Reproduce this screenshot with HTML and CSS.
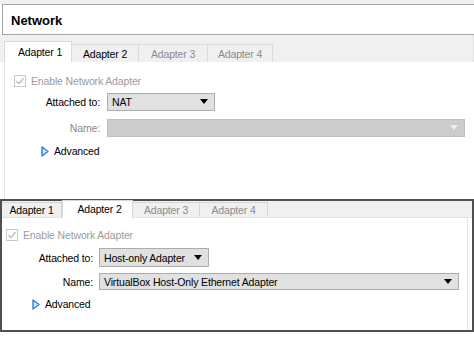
FILE: index.html
```html
<!DOCTYPE html>
<html>
<head>
<meta charset="utf-8">
<link rel="stylesheet" href="styles.css">
</head>
<body>
<div class="page">
  <div class="topstrip"></div>
  <div class="header">Network</div>
  <div class="tabbar">
    <div class="tab sel t1">Adapter 1</div>
    <div class="tab t2">Adapter 2</div>
    <div class="tab dis t3">Adapter 3</div>
    <div class="tab dis t4">Adapter 4</div>
  </div>
  <div class="pane">
    <div class="check">
      <svg width="12" height="12" viewBox="0 0 12 12"><rect x="0.5" y="0.5" width="11" height="11" fill="#fff" stroke="#c8c8c8"/><path d="M2.5 6.2 L5 8.6 L9.6 3.2" fill="none" stroke="#b4b4b4" stroke-width="1.2"/></svg>
      <span class="dim">Enable Network Adapter</span>
    </div>
    <div class="form">
      <div class="lbl">Attached to:</div>
      <div class="sel nat">NAT<svg class="arr" width="8" height="5" viewBox="0 0 8 5"><path d="M0 0 H8 L4 5 Z" fill="#000"/></svg></div>
      <div class="lbl dim2">Name:</div>
      <div class="sel off wide"><svg class="arr" width="8" height="5" viewBox="0 0 8 5"><path d="M0 0 H8 L4 5 Z" fill="#eeeeee"/></svg></div>
    </div>
    <div class="adv">
      <svg width="8" height="11" viewBox="0 0 8 11"><path d="M1 1 L7 5.5 L1 10 Z" fill="#d3e8fb" stroke="#2b84d8" stroke-width="1.4" stroke-linejoin="round"/></svg>
      <span>Advanced</span>
    </div>
  </div>

  <div class="overlay">
    <div class="tabbar2">
      <div class="tab2 u1">Adapter 1</div>
      <div class="tab2 sel u2">Adapter 2</div>
      <div class="tab2 dis u3">Adapter 3</div>
      <div class="tab2 dis u4">Adapter 4</div>
    </div>
    <div class="pane2">
      <div class="check c2">
        <svg width="12" height="12" viewBox="0 0 12 12"><rect x="0.5" y="0.5" width="11" height="11" fill="#fff" stroke="#c8c8c8"/><path d="M2.5 6.2 L5 8.6 L9.6 3.2" fill="none" stroke="#b4b4b4" stroke-width="1.2"/></svg>
        <span class="dim">Enable Network Adapter</span>
      </div>
      <div class="form2">
        <div class="lbl">Attached to:</div>
        <div class="sel host">Host-only Adapter<svg class="arr" width="8" height="5" viewBox="0 0 8 5"><path d="M0 0 H8 L4 5 Z" fill="#000"/></svg></div>
        <div class="lbl">Name:</div>
        <div class="sel wide2">VirtualBox Host-Only Ethernet Adapter<svg class="arr" width="8" height="5" viewBox="0 0 8 5"><path d="M0 0 H8 L4 5 Z" fill="#000"/></svg></div>
      </div>
      <div class="adv adv2">
        <svg width="8" height="11" viewBox="0 0 8 11"><path d="M1 1 L7 5.5 L1 10 Z" fill="#d3e8fb" stroke="#2b84d8" stroke-width="1.4" stroke-linejoin="round"/></svg>
        <span>Advanced</span>
      </div>
    </div>
  </div>
</div>
</body>
</html>
```

FILE: styles.css
```css
* { box-sizing: border-box; }
html, body { margin: 0; padding: 0; }
body {
  width: 474px;
  height: 344px;
  overflow: hidden;
  background: #fff;
  font-family: "Liberation Sans", Arial, sans-serif;
  font-size: 10.5px;
  letter-spacing: -0.15px;
  color: #000;
}
.page {
  position: relative;
  width: 474px;
  height: 344px;
}
.topstrip {
  height: 4px;
  background: #f0f0f0;
}
.header {
  height: 31px;
  margin-left: 2px;
  border-top: 1px solid #a3a3a3;
  border-bottom: 1px solid #a3a3a3;
  border-left: 1px solid #a3a3a3;
  background: #fff;
  font-weight: bold;
  font-size: 13px;
  letter-spacing: 0;
  display: flex;
  align-items: center;
  padding-left: 8px;
  padding-top: 1px;
}
.tabbar {
  height: 27px;
  background: #f0f0f0;
  display: flex;
  align-items: flex-end;
  padding-left: 4px;
  border-right: 1px solid #e2e2e2;
}
.tab {
  height: 18px;
  border: 1px solid #dadada;
  border-bottom: none;
  border-left: none;
  background: #f0f0f0;
  display: flex;
  align-items: center;
  justify-content: center;
  padding-top: 1px;
}
.tab.sel {
  height: 21px;
  background: #fff;
  border: 1px solid #dadada;
  border-bottom: none;
  padding-top: 0;
}
.t1 { width: 68px; }
.t2 { width: 67px; }
.t3 { width: 69px; }
.t4 { width: 65px; }
.dis { color: #8c8c8c; }
.pane {
  height: 258px;
  margin-left: 4px;
  border-left: 1px solid #e6e6e6;
  background: #fff;
  padding-top: 12px;
}
.check {
  display: flex;
  align-items: center;
  gap: 5px;
  height: 13px;
  padding-left: 9px;
}
.check svg { flex: none; }
.dim { color: #9c9c9c; }
.dim2 { color: #8a8a8a; }
.form {
  display: grid;
  grid-template-columns: 102px 358px;
  grid-template-rows: 18px 18px;
  row-gap: 8px;
  margin-top: 6px;
  align-items: center;
}
.lbl {
  text-align: right;
  padding-right: 7px;
}
.sel {
  position: relative;
  height: 100%;
  display: flex;
  align-items: center;
  padding-left: 4px;
  background: #e1e1e1;
  border: 1px solid #adadad;
}
.sel .arr {
  position: absolute;
  right: 6px;
  top: 50%;
  margin-top: -3px;
}
.nat { width: 108px; }
.off {
  background: #cccccc;
  border-color: #bfbfbf;
}
.wide { width: 358px; }
.adv {
  display: flex;
  align-items: center;
  gap: 5px;
  height: 12px;
  margin-top: 8px;
  padding-left: 36px;
}
.adv svg { flex: none; }

.overlay {
  position: absolute;
  left: 0;
  top: 199px;
  width: 474px;
  height: 133px;
  border: 2px solid #505050;
  background: #fff;
}
.tabbar2 {
  height: 17px;
  background: #f0f0f0;
  display: flex;
  align-items: flex-end;
  border-bottom: 1px solid #e4e4e4;
}
.tab2 {
  height: 15px;
  border: 1px solid #d6d6d6;
  border-bottom: none;
  border-left: none;
  background: #f0f0f0;
  display: flex;
  align-items: center;
  justify-content: center;
}
.tab2.sel {
  height: 18px;
  margin-bottom: -1px;
  background: #fff;
  border-left: 1px solid #d6d6d6;
  padding-bottom: 2px;
}
.u1 { width: 60px; }
.u2 { width: 71px; }
.u3 { width: 67px; }
.u4 { width: 68px; }
.pane2 {
  height: 112px;
  padding-top: 10px;
  border-right: 1px solid #e4e4e4;
  margin-right: 4px;
}
.c2 { padding-left: 4px; }
.form2 {
  display: grid;
  grid-template-columns: 97px 360px;
  grid-template-rows: 19px 17px;
  row-gap: 6px;
  margin-top: 7px;
  align-items: center;
}
.form2 .lbl { padding-right: 6px; }
.host { width: 110px; }
.wide2 { width: 360px; }
.adv2 {
  margin-top: 8px;
  padding-left: 30px;
}
```
